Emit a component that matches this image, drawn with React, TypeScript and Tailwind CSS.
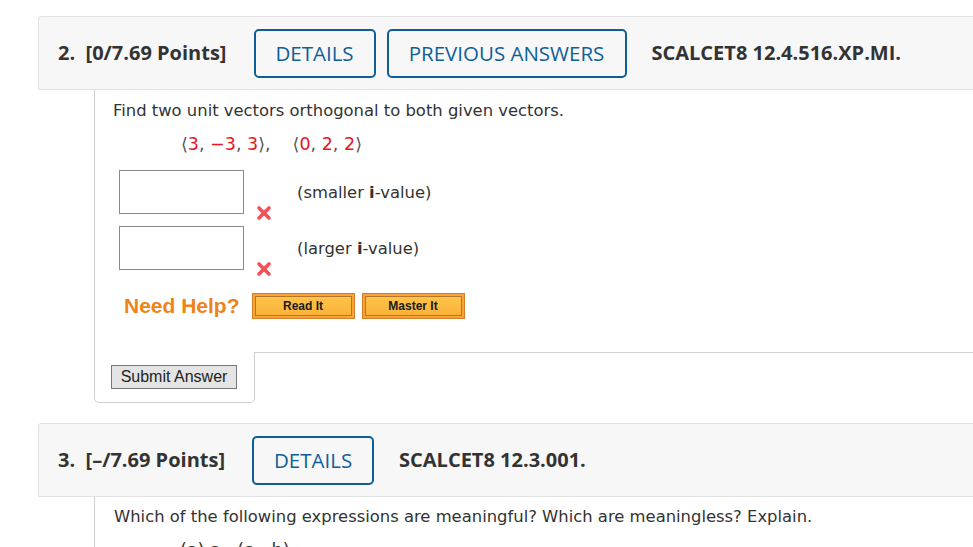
import React from "react";

const body = { fontFamily: '"DejaVu Sans", Verdana, sans-serif' };
const head = { fontFamily: '"Open Sans", sans-serif' };
const arial = { fontFamily: '"Liberation Sans", Arial, sans-serif' };

function WrongMark() {
  return (
    <svg viewBox="0 0 16 16" className="h-[16px] w-[16px]">
      <path
        d="M3 3L13 13M13 3L3 13"
        stroke="#f4505a"
        strokeWidth="3.6"
        strokeLinecap="round"
      />
    </svg>
  );
}

function OutlineButton({ label, width }: { label: string; width: string }) {
  return (
    <div
      className={`flex h-[49px] ${width} items-center justify-center rounded-[5px] border-2 border-[#0e5f98] text-[20.5px] text-[#0e5f98]`}
      style={head}
    >
      {label}
    </div>
  );
}

function Header({
  num,
  points,
  buttons,
  code,
}: {
  num: string;
  points: string;
  buttons: { label: string; width: string }[];
  code: string;
}) {
  return (
    <div className="ml-[38px] flex h-[74px] w-[1000px] items-center rounded-tl-[3px] border border-[#e2e2e2] bg-[#f7f7f7] pl-[19px]">
      <div
        className="whitespace-pre text-[20px] font-bold text-[#333]"
        style={head}
      >
        {num}
        {"  "}
        {points}
      </div>
      <div className="ml-[27px] flex gap-[11px]">
        {buttons.map((b) => (
          <OutlineButton key={b.label} label={b.label} width={b.width} />
        ))}
      </div>
      <div className="ml-[25px] text-[20px] font-bold text-[#333]" style={head}>
        {code}
      </div>
    </div>
  );
}

function HelpButton({ label }: { label: string }) {
  return (
    <div className="h-[26px] w-[103px] border border-[#d27e22] bg-[#f7a23a] p-[2px]">
      <div
        className="flex h-full items-center justify-center border border-[#b9732a] bg-gradient-to-b from-[#ffc449] to-[#fbb238] text-[12px] font-bold text-[#1a1a1a]"
        style={arial}
      >
        {label}
      </div>
    </div>
  );
}

function AnswerRow({ label }: { label: string }) {
  return (
    <div className="flex h-[51px] items-start">
      <div className="h-[44px] w-[125px] border border-[#8a8a8a] bg-white" />
      <div className="ml-[12px] mt-[35px]">
        <WrongMark />
      </div>
      <div
        className="ml-[25px] mt-[13px] text-[16.4px] leading-[20px] text-[#333]"
        style={body}
      >
        ({label} <span className="font-bold">i</span>-value)
      </div>
    </div>
  );
}

export default function App() {
  const red = "text-[#e8141c]";
  const gray = "text-[#555]";
  return (
    <div className="h-[547px] w-[973px] overflow-hidden bg-white pt-[16px]">
      <Header
        num="2."
        points="[0/7.69 Points]"
        buttons={[
          { label: "DETAILS", width: "w-[122px]" },
          { label: "PREVIOUS ANSWERS", width: "w-[240px]" },
        ]}
        code="SCALCET8 12.4.516.XP.MI."
      />

      <div className="ml-[94px] w-[900px]">
        <div className="h-[262px] border-l border-[#cfcfcf] pl-[18px] pt-[10px]">
          <div className="text-[16.4px] leading-[22px] text-[#333]" style={body}>
            Find two unit vectors orthogonal to both given vectors.
          </div>
          <div
            className="ml-[68px] mt-[10px] text-[17.5px] leading-[24px]"
            style={body}
          >
            <span className={gray}>⟨</span>
            <span className={red}>3</span>
            <span className={gray}>, </span>
            <span className={red}>−3</span>
            <span className={gray}>, </span>
            <span className={red}>3</span>
            <span className={gray}>⟩,</span>
            <span className="inline-block w-[22px]" />
            <span className={gray}>⟨</span>
            <span className={red}>0</span>
            <span className={gray}>, </span>
            <span className={red}>2</span>
            <span className={gray}>, </span>
            <span className={red}>2</span>
            <span className={gray}>⟩</span>
          </div>
          <div className="ml-[6px] mt-[14px] flex flex-col gap-[5px]">
            <AnswerRow label="smaller" />
            <AnswerRow label="larger" />
          </div>
          <div className="ml-[11px] mt-[13px] flex items-center">
            <div className="text-[21px] font-bold text-[#ee8418]" style={arial}>
              Need Help?
            </div>
            <div className="ml-[12px] flex gap-[7px]">
              <HelpButton label="Read It" />
              <HelpButton label="Master It" />
            </div>
          </div>
        </div>
        <div className="flex">
          <div className="h-[51px] w-[161px] rounded-b-[5px] border-x border-b border-[#cfcfcf] pl-[16px] pt-[13px]">
            <div
              className="flex h-[24px] w-[126px] items-center justify-center border border-[#777] bg-[#e4e4e4] text-[16px] text-[#222]"
              style={arial}
            >
              Submit Answer
            </div>
          </div>
          <div className="flex-1 border-t border-[#cfcfcf]" />
        </div>
      </div>

      <div className="mt-[20px]">
        <Header
          num="3."
          points="[–/7.69 Points]"
          buttons={[{ label: "DETAILS", width: "w-[122px]" }]}
          code="SCALCET8 12.3.001."
        />
      </div>
      <div className="ml-[94px] h-[100px] border-l border-[#cfcfcf] pl-[19px] pt-[9px]">
        <div className="text-[16.4px] leading-[22px] text-[#333]" style={body}>
          Which of the following expressions are meaningful? Which are
          meaningless? Explain.
        </div>
        <div
          className="ml-[66px] mt-[10px] text-[17.5px] leading-[24px] text-[#333]"
          style={body}
        >
          (a) a · (a · b)
        </div>
      </div>
    </div>
  );
}
